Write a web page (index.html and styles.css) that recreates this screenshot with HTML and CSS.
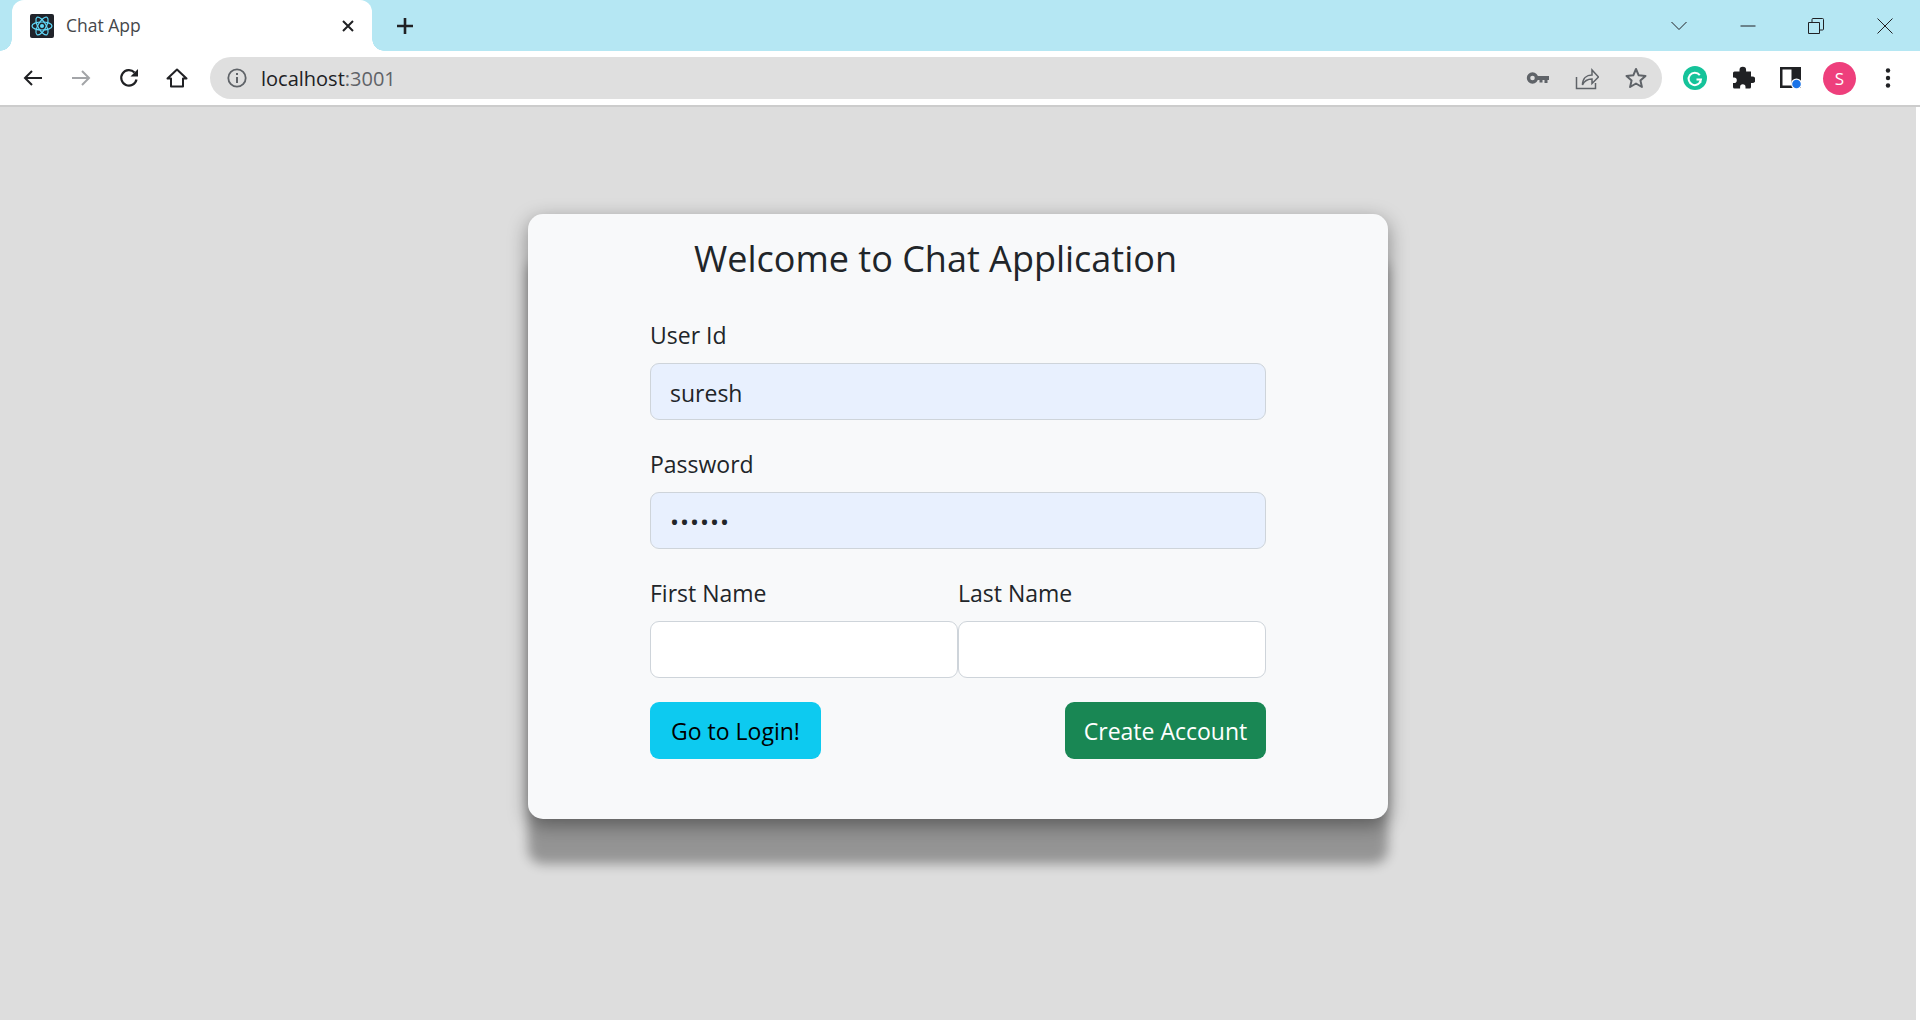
FILE: index.html
```html
<!DOCTYPE html>
<html lang="en">
<head>
    <meta charset="UTF-8">
    <title>Chat App</title>
    <link rel="stylesheet" href="styles.css">
</head>
<body>
    <div class="tabstrip">
        <div class="tab">
            <svg class="favicon" viewBox="0 0 24 24">
                <rect width="24" height="24" rx="2" fill="#20232a"/>
                <g fill="none" stroke="#61dafb" stroke-width="1.2">
                    <ellipse cx="12" cy="12" rx="10" ry="4"/>
                    <ellipse cx="12" cy="12" rx="10" ry="4" transform="rotate(60 12 12)"/>
                    <ellipse cx="12" cy="12" rx="10" ry="4" transform="rotate(120 12 12)"/>
                </g>
                <circle cx="12" cy="12" r="2" fill="#61dafb"/>
            </svg>
            <span class="tab-title">Chat App</span>
            <svg class="tab-close" viewBox="0 0 12 12"><path d="M1 1l10 10M11 1L1 11" stroke="#202124" stroke-width="2" fill="none"/></svg>
        </div>
        <svg class="new-tab" viewBox="0 0 18 18"><path d="M9 1v16M1 9h16" stroke="#202124" stroke-width="2.6" fill="none"/></svg>
        <div class="window-controls">
            <svg class="win-btn win-chevron" viewBox="0 0 16 10"><path d="M.5 1L8 8.500 15.500 1" stroke="#202124" fill="none"/></svg>
            <svg class="win-btn win-min" viewBox="0 0 16 16"><path d="M.5 8h15" stroke="#202124" fill="none"/></svg>
            <svg class="win-btn win-restore" viewBox="0 0 16 16"><path d="M.5 4.500h11v11H.5zM4 4.500V1.500A1 1 0 0 1 5 .5h9.500a1 1 0 0 1 1 1V11a1 1 0 0 1-1 1h-3" stroke="#202124" fill="none"/></svg>
            <svg class="win-btn win-close" viewBox="0 0 16 16"><path d="M.5.5l15 15M15.500.5l-15 15" stroke="#202124" fill="none"/></svg>
        </div>
    </div>

    <div class="toolbar">
        <svg class="tool" viewBox="0 0 24 24"><path d="M21 12H4M11 5l-7 7 7 7" stroke="#202124" stroke-width="2" fill="none"/></svg>
        <svg class="tool" viewBox="0 0 24 24"><path d="M3 12h17M13 5l7 7-7 7" stroke="#a3a5a8" stroke-width="2" fill="none"/></svg>
        <svg class="tool" viewBox="0 0 24 24"><path d="M19.500 13.500A7.700 7.700 0 1 1 17.500 6.500" stroke="#202124" stroke-width="2.200" fill="none"/><path d="M21 3v7.500h-7.500z" fill="#202124"/></svg>
        <svg class="tool" viewBox="0 0 24 24"><path d="M12 3.500L2.500 12.500H6V20.500h12V12.500h3.500z" stroke="#202124" stroke-width="2" fill="none" stroke-linejoin="round"/></svg>

        <div class="omnibox">
            <svg class="info" viewBox="0 0 20 20">
                <circle cx="10" cy="10" r="8.700" stroke="#5f6368" stroke-width="1.800" fill="none"/>
                <path d="M9 9h2v6H9zM9 5h2v2H9z" fill="#5f6368"/>
            </svg>
            <span class="url">localhost<span class="url-port">:3001</span></span>
            <svg class="omni-icon" viewBox="0 0 24 24"><circle cx="6.500" cy="12" r="4" stroke="#5f6368" stroke-width="3.400" fill="none"/><path d="M10 10h13v4h-1.500v3h-3v-3h-2v2.500h-3V14H10z" fill="#5f6368"/></svg>
            <svg class="omni-icon" viewBox="0 0 24 24"><path d="M1.500 11v11.500h19V17M7.500 19c0-6.500 4-10 9.500-10V4l6.500 7-6.500 6.500V13c-4 0-7.500 1.500-9.500 6z" stroke="#5f6368" stroke-width="1.500" fill="none"/></svg>
            <svg class="omni-icon" viewBox="0 0 24 24"><path d="M12 3l2.700 6.300 6.800.6-5.100 4.500 1.500 6.600-5.900-3.500-5.900 3.500 1.500-6.600-5.100-4.500 6.800-.6z" stroke="#5f6368" stroke-width="2" fill="none" stroke-linejoin="round"/></svg>
        </div>

        <svg class="tool ext" viewBox="0 0 24 24">
            <circle cx="12" cy="12" r="12" fill="#15c39a"/>
            <path d="M16.800 9.200A6.200 6.200 0 1 0 18 13.500h-4.500" stroke="#fff" stroke-width="2" fill="none"/>
            <path d="M17.800 13.300l-2.300 3 3 .5z" fill="#fff"/>
        </svg>
        <svg class="tool ext" viewBox="0 0 24 24"><path d="M8.500 4a3.300 3.300 0 0 1 6.600 0v1.500H20v5h1.200a3.300 3.300 0 0 1 0 6.600H20V21a1.500 1.500 0 0 1-1.500 1.500H14.500V21a2.700 2.700 0 0 0-5.400 0v1.500H3.500A1.500 1.500 0 0 1 2 21v-4h1a2.800 2.800 0 0 0 0-5.600H2V7a1.500 1.500 0 0 1 1.500-1.500h5z" fill="#202124"/></svg>
        <svg class="tool ext" viewBox="0 0 24 24">
            <path d="M1 1h21v21H1z" fill="#202124"/>
            <path d="M3.500 3.500h9v16h-9z" fill="#fff"/>
            <circle cx="17.500" cy="18" r="5.500" fill="#fff"/>
            <circle cx="17.500" cy="18" r="4.300" fill="#1a73e8"/>
        </svg>
        <span class="avatar">S</span>
        <svg class="tool menu" viewBox="0 0 24 24"><circle cx="12" cy="4.500" r="2.200" fill="#202124"/><circle cx="12" cy="12" r="2.200" fill="#202124"/><circle cx="12" cy="19.500" r="2.200" fill="#202124"/></svg>
    </div>

    <div class="page">
        <div class="card">
            <div class="form-box">
                <h3 class="title">Welcome to Chat Application</h3>
                <div class="field">
                    <label for="userId">User Id</label>
                    <input type="text" id="userId" class="input autofilled" value="suresh">
                </div>
                <div class="field">
                    <label for="password">Password</label>
                    <input type="password" id="password" class="input autofilled secret" value="suresh">
                </div>
                <div class="field name-row">
                    <div class="name-col">
                        <label for="firstName">First Name</label>
                        <input type="text" id="firstName" class="input">
                    </div>
                    <div class="name-col">
                        <label for="lastName">Last Name</label>
                        <input type="text" id="lastName" class="input">
                    </div>
                </div>
                <div class="actions">
                    <button class="btn btn-info">Go to Login!</button>
                    <button class="btn btn-success">Create Account</button>
                </div>
            </div>
        </div>
    </div>
</body>
</html>
```

FILE: styles.css
```css
* {
    box-sizing: border-box;
}
html, body {
    height: 100%;
}
body {
    margin: 0;
    display: flex;
    flex-direction: column;
    overflow: hidden;
    background-color: #fff;
    font-family: "Open Sans", sans-serif;
    color: #212529;
}

/* Browser chrome */
.tabstrip {
    height: 51px;
    display: flex;
    align-items: center;
    background-color: #b5e7f3;
    flex-shrink: 0;
}
.tab {
    position: relative;
    width: 360px;
    height: 51px;
    margin-left: 12px;
    padding-left: 18px;
    display: flex;
    align-items: center;
    background-color: #fff;
    border-radius: 12px 12px 0 0;
}
/* the little outward curves at the foot of the tab */
.tab::before,
.tab::after {
    content: "";
    position: absolute;
    bottom: 0;
    width: 12px;
    height: 12px;
}
.tab::before {
    left: -12px;
    background: radial-gradient(circle at 0 0, #b5e7f3 11.5px, #fff 12px);
}
.tab::after {
    right: -12px;
    background: radial-gradient(circle at 100% 0, #b5e7f3 11.5px, #fff 12px);
}
.favicon {
    width: 24px;
    height: 24px;
}
.tab-title {
    margin-left: 12px;
    padding-bottom: 2px;
    font-size: 17.5px;
    color: #45474a;
}
.tab-close {
    width: 12px;
    height: 12px;
    margin-left: auto;
    margin-right: 18px;
}
.new-tab {
    width: 18px;
    height: 18px;
    margin-left: 24px;
}
.window-controls {
    margin-left: auto;
    display: flex;
    align-items: center;
}
.win-btn {
    width: 16px;
    height: 16px;
}
.win-chevron {
    height: 10px;
    margin-right: 53px;
}
.win-min {
    margin-right: 52px;
}
.win-restore {
    margin-right: 53px;
}
.win-close {
    margin-right: 27px;
}

.toolbar {
    height: 56px;
    padding-left: 21px;
    display: flex;
    align-items: center;
    gap: 24px;
    flex-shrink: 0;
    background-color: #fff;
    border-bottom: 2px solid #ccc;
}
.tool {
    width: 24px;
    height: 24px;
    flex-shrink: 0;
}
.omnibox {
    width: 1452px;
    height: 42px;
    margin-left: -3px;
    margin-right: -3px;
    padding: 0 14px 0 17px;
    display: flex;
    align-items: center;
    gap: 25px;
    background-color: #dfdfdf;
    border-radius: 21px;
}
.info {
    width: 20px;
    height: 20px;
    flex-shrink: 0;
}
.url {
    margin-left: -11px;
    margin-right: auto;
    font-size: 20px;
    color: #202124;
}
.url-port {
    color: #5f6368;
}
.omni-icon {
    width: 24px;
    height: 24px;
    flex-shrink: 0;
}
.avatar {
    width: 33px;
    height: 33px;
    margin: 0 -4px;
    display: flex;
    align-items: center;
    justify-content: center;
    flex-shrink: 0;
    border-radius: 50%;
    background-color: #ee3f7c;
    color: #fff;
    font-size: 17px;
}

/* Page */
.page {
    flex: 1;
    margin-right: 4px;
    padding-top: 107px;
    background-color: #ddd;
}
.card {
    width: 860px;
    height: 605px;
    margin-left: 528px;
    padding: 0 122px;
    background-color: #f8f9fa;
    border-radius: 15px;
    box-shadow: 0 45px 12px rgba(0, 0, 0, 0.33), 0 6px 20px rgba(0, 0, 0, 0.4);
}
.title {
    margin: 0;
    padding: 18px 0 0 44px;
    font-size: 36px;
    line-height: 54px;
    font-weight: 400;
    white-space: nowrap;
}
.field {
    margin-top: 26px;
}
.title + .field {
    margin-top: 31px;
}
label {
    display: block;
    margin-bottom: 10px;
    font-size: 23px;
    line-height: 36px;
}
.input {
    display: block;
    width: 100%;
    height: 57px;
    padding: 2px 19px 0;
    background-color: #fff;
    border: 1px solid #ced4da;
    border-radius: 9px;
    font-family: inherit;
    font-size: 23px;
    color: #212529;
}
.autofilled {
    background-color: #e8f0fe;
}
.secret {
    font-size: 24px;
    letter-spacing: 1px;
}
.name-row {
    display: flex;
}
.name-col {
    width: 50%;
}
.actions {
    margin-top: 24px;
    display: flex;
    justify-content: space-between;
}
.btn {
    height: 57px;
    padding: 0;
    border: none;
    border-radius: 9px;
    font-family: inherit;
    font-size: 23px;
    white-space: nowrap;
}
.btn-info {
    width: 171px;
    background-color: #0dcaf0;
    color: #000;
}
.btn-success {
    width: 201px;
    background-color: #198754;
    color: #fff;
}
```
